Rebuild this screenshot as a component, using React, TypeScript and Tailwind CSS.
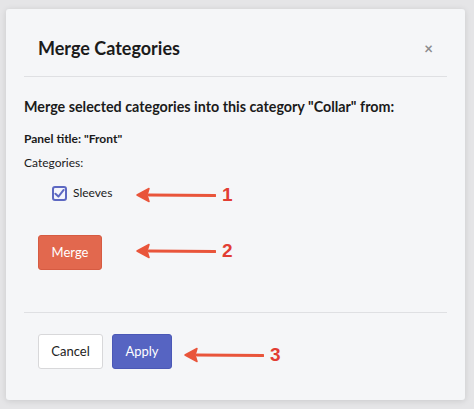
import React from "react";

const Arrow = ({ num, className }: { num: string; className: string }) => (
  <div className={`absolute flex items-center ${className}`}>
    <svg width="80" height="16" viewBox="0 0 80 16" fill="none">
      <path d="M13 8 L79 8.6" stroke="#e9553b" strokeWidth="3" strokeLinecap="round" />
      <path d="M1 8 L13 1.5 L11 8 L13 14.5 Z" fill="#e9553b" stroke="#e9553b" strokeWidth="1.5" strokeLinejoin="round" />
    </svg>
    <span className="ml-[6px] text-[19px] font-bold leading-none text-[#e23d33] font-['Liberation_Sans',Arial,sans-serif]">
      {num}
    </span>
  </div>
);

export default function App() {
  return (
    <div className="w-[474px] h-[409px] bg-[#e5e5e7] pl-[6px] pt-[9px] font-['Lato','Open_Sans',sans-serif] text-[#1b1b1b]">
      <div className="relative w-[459px] h-[391px] bg-[#f5f6f8] rounded-[3px] shadow-[0_1px_6px_rgba(0,0,0,0.12)] px-[18px]">
        {/* header */}
        <div className="flex items-center justify-between pt-[27px] pb-[16px] pl-[14px] pr-[14px] border-b border-[#dfe0e3]">
          <h2 className="text-[18px] leading-[24px] font-bold">Merge Categories</h2>
          <span className="text-[15px] leading-none font-bold text-[#8c8c8e]">×</span>
        </div>

        {/* body */}
        <div className="pt-[20px] pb-[42px] border-b border-[#dfe0e3]">
          <h3 className="text-[14.3px] leading-[20px] font-bold">
            Merge selected categories into this category "Collar" from:
          </h3>
          <p className="mt-[14px] text-[12px] leading-[16px] font-bold">Panel title: "Front"</p>
          <p className="mt-[8px] text-[12px] leading-[16px]">Categories:</p>
          <label className="mt-[12px] ml-[28px] flex items-center h-[20px] text-[12px]">
            <span className="w-[15px] h-[15px] rounded-[3px] border-2 border-[#5d68c2] bg-[#f4f5fc] flex items-center justify-center">
              <svg width="11" height="11" viewBox="0 0 10 10" fill="none">
                <path d="M1.3 5.2 L4 7.8 L8.8 1.8" stroke="#5d68c2" strokeWidth="1.8" strokeLinecap="round" strokeLinejoin="round" />
              </svg>
            </span>
            <span className="ml-[6px]">Sleeves</span>
          </label>
          <button className="mt-[32px] ml-[14px] w-[64px] h-[35px] rounded-[3px] bg-[#e2684e] border border-[#d65b42] text-white text-[13px]">
            Merge
          </button>
        </div>

        {/* footer */}
        <div className="pt-[21px] pl-[14px] flex gap-[9px]">
          <button className="w-[65px] h-[35px] rounded-[3px] bg-white border border-[#d8d8da] text-[13px] text-[#222]">
            Cancel
          </button>
          <button className="w-[60px] h-[35px] rounded-[3px] bg-[#5664c2] border border-[#4b58b6] text-white text-[13px]">
            Apply
          </button>
        </div>

        <Arrow num="1" className="left-[130px] top-[176px]" />
        <Arrow num="2" className="left-[130px] top-[232px]" />
        <Arrow num="3" className="left-[178px] top-[336px]" />
      </div>
    </div>
  );
}
